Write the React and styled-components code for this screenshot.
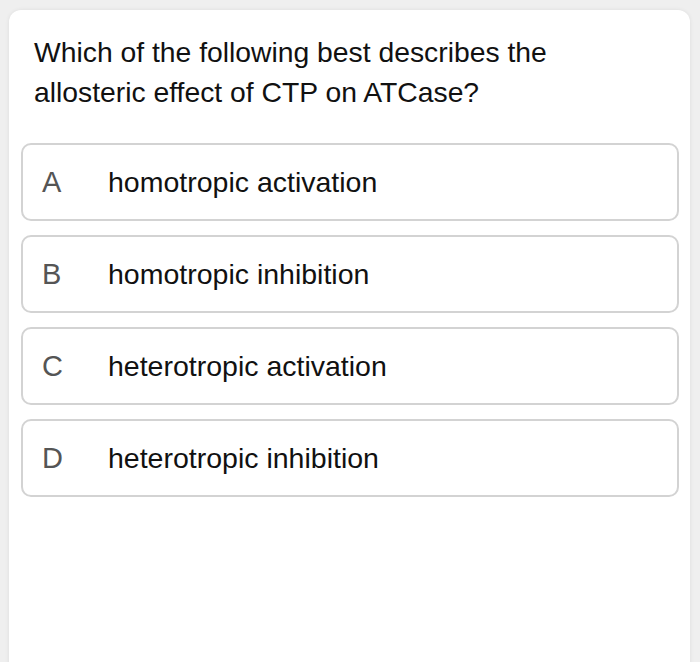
import React from "react";
import styled, { createGlobalStyle } from "styled-components";

const GlobalStyle = createGlobalStyle`
  body {
    margin: 0;
    background: #efefef;
    font-family: "Liberation Sans", Arial, sans-serif;
  }
`;

const options = [
  { letter: "A", text: "homotropic activation" },
  { letter: "B", text: "homotropic inhibition" },
  { letter: "C", text: "heterotropic activation" },
  { letter: "D", text: "heterotropic inhibition" },
];

const App = () => {
  return (
    <>
      <GlobalStyle />
      <Page>
        <Card>
          <Question>
            Which of the following best describes the allosteric effect of CTP
            on ATCase?
          </Question>
          <OptionList>
            {options.map((o) => (
              <Option key={o.letter}>
                <Letter>{o.letter}</Letter>
                <OptionText>{o.text}</OptionText>
              </Option>
            ))}
          </OptionList>
        </Card>
      </Page>
    </>
  );
};

export default App;

const Page = styled.div`
  height: 662px;
  overflow: hidden;
  padding: 10px 10px 0 9px;
  box-sizing: border-box;
`;

const Card = styled.div`
  background: #fff;
  border-radius: 12px;
  box-shadow: 0 0 4px rgba(0, 0, 0, 0.08);
  min-height: 700px;
  padding: 22px 11px 0 12px;
`;

const Question = styled.div`
  font-size: 28.3px;
  line-height: 40px;
  color: #111;
  max-width: 540px;
  padding-left: 13px;
  margin-bottom: 31px;
`;

const OptionList = styled.div`
  display: flex;
  flex-direction: column;
  gap: 14px;
`;

const Option = styled.div`
  display: flex;
  align-items: center;
  height: 78px;
  box-sizing: border-box;
  border: 2px solid #d3d3d3;
  border-radius: 10px;
  padding-left: 19px;
`;

const Letter = styled.span`
  width: 66px;
  font-size: 29px;
  color: #555;
`;

const OptionText = styled.span`
  font-size: 28.5px;
  color: #111;
`;
